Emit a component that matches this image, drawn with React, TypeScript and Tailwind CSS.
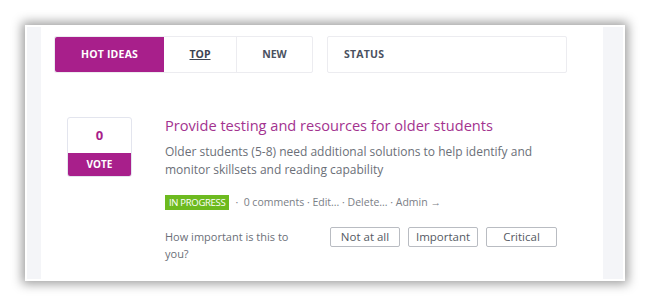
import React from "react";

export default function App() {
  return (
    <div className="w-[650px] h-[307px] bg-white overflow-hidden pt-[25px] pl-[25px]" style={{ fontFamily: '"Open Sans", sans-serif' }}>
      <div className="w-[600px] h-[256px] border-2 border-white shadow-[0_0_10px_3px_rgba(0,0,0,0.38)] flex">
        <div className="w-[14px] bg-[#f4f5f8]" />
        <div className="flex-1 bg-white pl-[13px] pt-[9px]">
          <div className="flex gap-[14px]">
            <div className="flex h-[37px] border border-[#ececf0] rounded-[2px]">
              <div className="w-[109px] bg-[#a81f8b] text-white text-[10.5px] font-bold tracking-[0.2px] flex items-center justify-center rounded-l-[2px]">HOT IDEAS</div>
              <div className="w-[73px] text-[#3d4452] text-[10.5px] font-bold underline flex items-center justify-center border-r border-[#ececf0]">TOP</div>
              <div className="w-[75px] text-[#4a5160] text-[10.5px] font-bold flex items-center justify-center">NEW</div>
            </div>
            <div className="w-[240px] h-[37px] border border-[#ececf0] rounded-[2px] text-[#4a5160] text-[10.5px] font-bold flex items-center pl-[16px] tracking-[0.2px]">STATUS</div>
          </div>
          <div className="flex mt-[44px] pl-[13px]">
            <div className="w-[65px] h-[60px] rounded-[3px] border border-[#e3e5ee] overflow-hidden flex flex-col">
              <div className="h-[35px] flex items-center justify-center text-[#a81f8b] text-[13px] font-bold">0</div>
              <div className="flex-1 bg-[#a81f8b] text-white text-[10px] font-bold flex items-center justify-center">VOTE</div>
            </div>
            <div className="ml-[33px] -mt-[3px]">
              <div className="text-[#a3338f] text-[14.6px] leading-[22px]">Provide testing and resources for older students</div>
              <div className="text-[#6b6f78] text-[12px] leading-[18px] mt-[7px] w-[380px]">Older students (5-8) need additional solutions to help identify and monitor skillsets and reading capability</div>
              <div className="flex items-center mt-[16px] text-[10.5px] text-[#7a7e86]">
                <span className="bg-[#6dba1f] text-white text-[9.5px] h-[15px] px-[4px] flex items-center tracking-[-0.3px]">IN PROGRESS</span>
                <span className="ml-[6px] whitespace-pre">{"·  0 comments · Edit... · Delete... · Admin →"}</span>
              </div>
              <div className="flex mt-[16px]">
                <div className="w-[165px] pr-[40px] text-[11px] leading-[17px] text-[#6b6f78] pt-[1px]">How important is this to you?</div>
                <div className="flex gap-[8px]">
                  <button className="w-[70px] h-[20px] border border-[#b9bcc2] rounded-[2px] text-[11.5px] text-[#555a63] leading-none">Not at all</button>
                  <button className="w-[70px] h-[20px] border border-[#b9bcc2] rounded-[2px] text-[11.5px] text-[#555a63] leading-none">Important</button>
                  <button className="w-[71px] h-[20px] border border-[#b9bcc2] rounded-[2px] text-[11.5px] text-[#555a63] leading-none">Critical</button>
                </div>
              </div>
            </div>
          </div>
        </div>
        <div className="w-[20px] bg-[#f4f5f8]" />
      </div>
    </div>
  );
}
